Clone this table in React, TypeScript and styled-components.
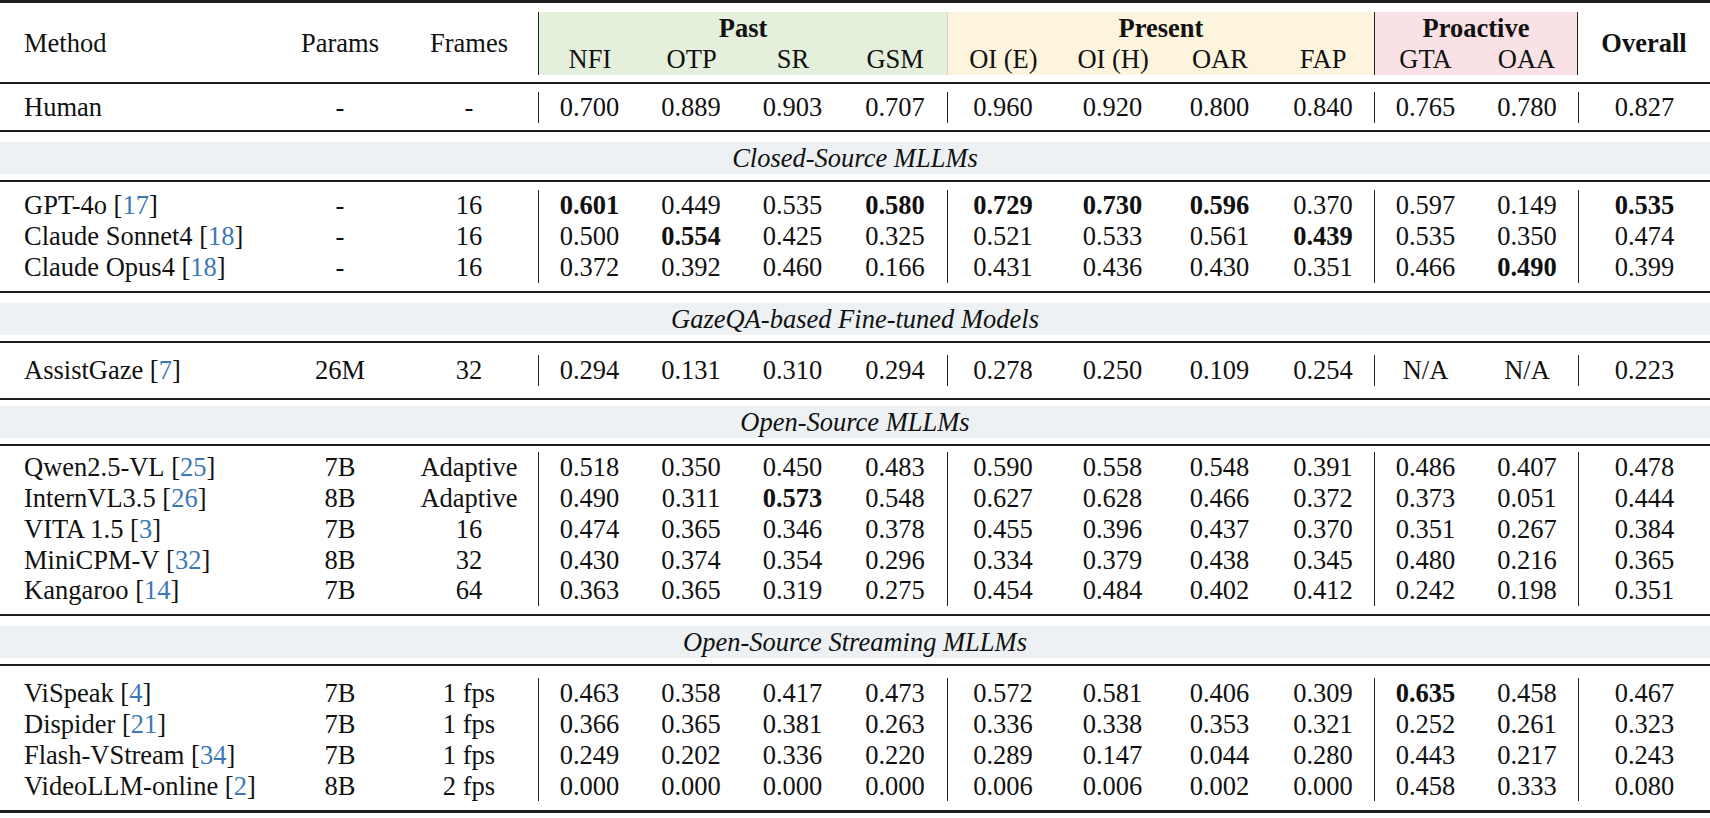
import styled, { createGlobalStyle } from "styled-components";

const GlobalStyle = createGlobalStyle`
  *, *::before, *::after { box-sizing: border-box; }
  html, body { margin: 0; padding: 0; background: #fff; }
  body {
    font-family: "Liberation Serif", "Times New Roman", serif;
    color: #111;
  }
`;

// column tracks, measured from the reference
const COLS =
  "280px 120px 138px 102px 102px 101px 104px 111px 109px 105px 102px 102px 102px 132px";
const BARS = [3, 7, 11, 13];

const Table = styled.div`
  width: 1710px;
  font-size: 26.5px;
  line-height: 1;
`;

const Rule = styled.div<{ $w?: number }>`
  height: ${(p) => p.$w ?? 2}px;
  background: #1e1e1e;
`;

const Head = styled.div`
  display: grid;
  grid-template-columns: 280px 120px 138px 409px 427px 204px 132px;
  padding: 9px 0 7px;
`;

const HeadCell = styled.div<{ $left?: boolean; $bold?: boolean }>`
  height: 63px;
  display: flex;
  align-items: center;
  justify-content: ${(p) => (p.$left ? "flex-start" : "center")};
  padding-left: ${(p) => (p.$left ? "24px" : "0")};
  font-weight: ${(p) => (p.$bold ? 700 : 400)};
`;

const Phase = styled.div<{ $tone: string; $cols: string; $edge: "solid" | "faint" | "box" }>`
  display: grid;
  grid-template-columns: ${(p) => p.$cols};
  grid-template-rows: 31.5px 31.5px;
  background: ${(p) => p.$tone};
  border-left: ${(p) => (p.$edge === "faint" ? "1px solid #d6d6d0" : "1.5px solid #222")};
  border-right: ${(p) => (p.$edge === "box" ? "1.5px solid #222" : "none")};
`;

const PhaseTitle = styled.div`
  grid-column: 1 / -1;
  display: flex;
  align-items: center;
  justify-content: center;
  font-weight: 700;
`;

const PhaseLabel = styled.div`
  display: flex;
  align-items: center;
  justify-content: center;
  white-space: nowrap;
`;

const Band = styled.div<{ $above: number; $below: number }>`
  margin: ${(p) => p.$above}px 0 ${(p) => p.$below}px;
  height: 32px;
  background: #edf1f4;
  display: flex;
  align-items: center;
  justify-content: center;
  font-style: italic;
`;

const Group = styled.div<{ $top: number; $bottom: number }>`
  padding: ${(p) => p.$top}px 0 ${(p) => p.$bottom}px;
`;

const Row = styled.div<{ $h: number }>`
  display: grid;
  grid-template-columns: ${COLS};
  height: ${(p) => p.$h}px;
`;

const Cell = styled.div<{ $left?: boolean; $bar?: boolean; $bold?: boolean }>`
  display: flex;
  align-items: center;
  justify-content: ${(p) => (p.$left ? "flex-start" : "center")};
  padding-left: ${(p) => (p.$left ? "24px" : "0")};
  border-left: ${(p) => (p.$bar ? "1.5px solid #222" : "none")};
  font-weight: ${(p) => (p.$bold ? 700 : 400)};
  white-space: nowrap;
`;

const Cite = styled.span`
  color: #3b78b8;
`;

type Entry = { name: string; cite?: string; cells: string[] };

const human: Entry[] = [
  { name: "Human", cells: ["-", "-", "0.700", "0.889", "0.903", "0.707", "0.960", "0.920", "0.800", "0.840", "0.765", "0.780", "0.827"] },
];

const closed: Entry[] = [
  { name: "GPT-4o", cite: "17", cells: ["-", "16", "0.601*", "0.449", "0.535", "0.580*", "0.729*", "0.730*", "0.596*", "0.370", "0.597", "0.149", "0.535*"] },
  { name: "Claude Sonnet4", cite: "18", cells: ["-", "16", "0.500", "0.554*", "0.425", "0.325", "0.521", "0.533", "0.561", "0.439*", "0.535", "0.350", "0.474"] },
  { name: "Claude Opus4", cite: "18", cells: ["-", "16", "0.372", "0.392", "0.460", "0.166", "0.431", "0.436", "0.430", "0.351", "0.466", "0.490*", "0.399"] },
];

const tuned: Entry[] = [
  { name: "AssistGaze", cite: "7", cells: ["26M", "32", "0.294", "0.131", "0.310", "0.294", "0.278", "0.250", "0.109", "0.254", "N/A", "N/A", "0.223"] },
];

const open: Entry[] = [
  { name: "Qwen2.5-VL", cite: "25", cells: ["7B", "Adaptive", "0.518", "0.350", "0.450", "0.483", "0.590", "0.558", "0.548", "0.391", "0.486", "0.407", "0.478"] },
  { name: "InternVL3.5", cite: "26", cells: ["8B", "Adaptive", "0.490", "0.311", "0.573*", "0.548", "0.627", "0.628", "0.466", "0.372", "0.373", "0.051", "0.444"] },
  { name: "VITA 1.5", cite: "3", cells: ["7B", "16", "0.474", "0.365", "0.346", "0.378", "0.455", "0.396", "0.437", "0.370", "0.351", "0.267", "0.384"] },
  { name: "MiniCPM-V", cite: "32", cells: ["8B", "32", "0.430", "0.374", "0.354", "0.296", "0.334", "0.379", "0.438", "0.345", "0.480", "0.216", "0.365"] },
  { name: "Kangaroo", cite: "14", cells: ["7B", "64", "0.363", "0.365", "0.319", "0.275", "0.454", "0.484", "0.402", "0.412", "0.242", "0.198", "0.351"] },
];

const streaming: Entry[] = [
  { name: "ViSpeak", cite: "4", cells: ["7B", "1 fps", "0.463", "0.358", "0.417", "0.473", "0.572", "0.581", "0.406", "0.309", "0.635*", "0.458", "0.467"] },
  { name: "Dispider", cite: "21", cells: ["7B", "1 fps", "0.366", "0.365", "0.381", "0.263", "0.336", "0.338", "0.353", "0.321", "0.252", "0.261", "0.323"] },
  { name: "Flash-VStream", cite: "34", cells: ["7B", "1 fps", "0.249", "0.202", "0.336", "0.220", "0.289", "0.147", "0.044", "0.280", "0.443", "0.217", "0.243"] },
  { name: "VideoLLM-online", cite: "2", cells: ["8B", "2 fps", "0.000", "0.000", "0.000", "0.000", "0.006", "0.006", "0.002", "0.000", "0.458", "0.333", "0.080"] },
];

const DataRow = ({ entry, h }: { entry: Entry; h: number }) => (
  <Row $h={h}>
    <Cell $left>
      {entry.name}
      {entry.cite && (
        <>
          &nbsp;[<Cite>{entry.cite}</Cite>]
        </>
      )}
    </Cell>
    {entry.cells.map((c, i) => {
      const bold = c.endsWith("*");
      return (
        <Cell key={i} $bar={BARS.includes(i + 1)} $bold={bold}>
          {bold ? c.slice(0, -1) : c}
        </Cell>
      );
    })}
  </Row>
);

const Rows = ({ list, h, top, bottom }: { list: Entry[]; h: number; top: number; bottom: number }) => (
  <Group $top={top} $bottom={bottom}>
    {list.map((e) => (
      <DataRow key={e.name} entry={e} h={h} />
    ))}
  </Group>
);

export default function App() {
  return (
    <>
      <GlobalStyle />
      <Table>
        <Rule $w={3} />
        <Head>
          <HeadCell $left>Method</HeadCell>
          <HeadCell>Params</HeadCell>
          <HeadCell>Frames</HeadCell>
          <Phase $tone="#e4f0dc" $cols="102fr 102fr 101fr 104fr" $edge="solid">
            <PhaseTitle>Past</PhaseTitle>
            <PhaseLabel>NFI</PhaseLabel>
            <PhaseLabel>OTP</PhaseLabel>
            <PhaseLabel>SR</PhaseLabel>
            <PhaseLabel>GSM</PhaseLabel>
          </Phase>
          <Phase $tone="#fcf4dd" $cols="111fr 109fr 105fr 102fr" $edge="faint">
            <PhaseTitle>Present</PhaseTitle>
            <PhaseLabel>OI (E)</PhaseLabel>
            <PhaseLabel>OI (H)</PhaseLabel>
            <PhaseLabel>OAR</PhaseLabel>
            <PhaseLabel>FAP</PhaseLabel>
          </Phase>
          <Phase $tone="#f9e1e5" $cols="1fr 1fr" $edge="box">
            <PhaseTitle>Proactive</PhaseTitle>
            <PhaseLabel>GTA</PhaseLabel>
            <PhaseLabel>OAA</PhaseLabel>
          </Phase>
          <HeadCell $bold>Overall</HeadCell>
        </Head>
        <Rule />
        <Rows list={human} h={31} top={8} bottom={7} />
        <Rule />
        <Band $above={10} $below={6}>Closed-Source MLLMs</Band>
        <Rule />
        <Rows list={closed} h={31} top={8} bottom={8} />
        <Rule />
        <Band $above={10} $below={6}>GazeQA-based Fine-tuned Models</Band>
        <Rule />
        <Rows list={tuned} h={31} top={12} bottom={12} />
        <Rule />
        <Band $above={6} $below={6}>Open-Source MLLMs</Band>
        <Rule />
        <Rows list={open} h={30.8} top={6} bottom={8} />
        <Rule />
        <Band $above={10} $below={6}>Open-Source Streaming MLLMs</Band>
        <Rule />
        <Rows list={streaming} h={30.8} top={12} bottom={9} />
        <Rule $w={3} />
      </Table>
    </>
  );
}
